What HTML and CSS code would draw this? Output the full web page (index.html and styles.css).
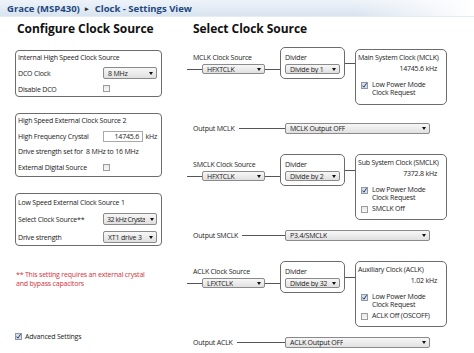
FILE: index.html
```html
<!DOCTYPE html>
<html>
<head>
<meta charset="utf-8">
<link rel="stylesheet" href="styles.css">
</head>
<body>
<div class="page">
  <div class="titlebar">Grace (MSP430) <span class="crumb">&#9656;</span> Clock - Settings View</div>
  <div class="main">
    <div class="left">
      <div class="heading">Configure Clock Source</div>
      <div class="box b1">
        <div class="row r-head">Internal High Speed Clock Source</div>
        <div class="row r-ctl"><span class="lbl">DCO Clock</span><div class="sel lsel"><span>8 MHz</span><i class="arrow"></i></div></div>
        <div class="row r-last"><span class="lbl">Disable DCO</span><span class="cb"></span></div>
      </div>
      <div class="box b2">
        <div class="row r-head">High Speed External Clock Source 2</div>
        <div class="row r-ctl"><span class="lbl">High Frequency Crystal</span><div class="inp">14745.6</div><span class="unit">kHz</span></div>
        <div class="row r-txt">Drive strength set for&nbsp; 8 MHz to 16 MHz</div>
        <div class="row r-last2"><span class="lbl">External Digital Source</span><span class="cb"></span></div>
      </div>
      <div class="box b3">
        <div class="row r-head3">Low Speed External Clock Source 1</div>
        <div class="row r-ctl"><span class="lbl">Select Clock Source**</span><div class="sel lsel tight"><span>32 kHz Crysta</span><i class="arrow"></i></div></div>
        <div class="row r-ctl"><span class="lbl">Drive strength</span><div class="sel lsel"><span>XT1 drive 3</span><i class="arrow"></i></div></div>
      </div>
      <div class="note">** This setting requires an external crystal<br>and bypass capacitors</div>
      <div class="adv"><span class="cb on"><svg viewBox="0 0 7 7" width="7" height="7"><path d="M1.6 3.6 L2.9 5.2 L5.6 1.2" fill="none" stroke="#2a3a55" stroke-width="1"/></svg></span><span>Advanced Settings</span></div>
    </div>
    <div class="right">
      <div class="heading hr">Select Clock Source</div>

      <div class="group">
        <div class="src">
          <div class="slbl">MCLK Clock Source</div>
          <div class="srow"><i class="hl w15"></i><div class="sel ssel"><span>HFXTCLK</span><i class="arrow"></i></div></div>
        </div>
        <i class="hl w15 c1"></i>
        <div class="div">
          <div class="dlbl">Divider</div>
          <div class="sel dsel"><span>Divide by 1</span><i class="arrow"></i></div>
        </div>
        <i class="hl w10 c2"></i>
        <div class="clk k1">
          <div class="ktitle">Main System Clock (MCLK)</div>
          <div class="kval">14745.6 kHz</div>
          <div class="kcb"><span class="cb on"><svg viewBox="0 0 7 7" width="7" height="7"><path d="M1.6 3.6 L2.9 5.2 L5.6 1.2" fill="none" stroke="#2a3a55" stroke-width="1"/></svg></span><span>Low Power Mode<br>Clock Request</span></div>
        </div>
      </div>
      <div class="out">
        <div class="olbl"><span>Output MCLK</span><i class="hl grow"></i></div>
        <div class="sel osel"><span>MCLK Output OFF</span><i class="arrow"></i></div>
      </div>

      <div class="group">
        <div class="src">
          <div class="slbl">SMCLK Clock Source</div>
          <div class="srow"><i class="hl w15"></i><div class="sel ssel"><span>HFXTCLK</span><i class="arrow"></i></div></div>
        </div>
        <i class="hl w15 c1"></i>
        <div class="div">
          <div class="dlbl">Divider</div>
          <div class="sel dsel"><span>Divide by 2</span><i class="arrow"></i></div>
        </div>
        <i class="hl w10 c2"></i>
        <div class="clk k2">
          <div class="ktitle">Sub System Clock (SMCLK)</div>
          <div class="kval">7372.8 kHz</div>
          <div class="kcb"><span class="cb on"><svg viewBox="0 0 7 7" width="7" height="7"><path d="M1.6 3.6 L2.9 5.2 L5.6 1.2" fill="none" stroke="#2a3a55" stroke-width="1"/></svg></span><span>Low Power Mode<br>Clock Request</span></div>
          <div class="kcb k-off"><span class="cb"></span><span>SMCLK Off</span></div>
        </div>
      </div>
      <div class="out">
        <div class="olbl"><span>Output SMCLK</span><i class="hl grow"></i></div>
        <div class="sel osel"><span>P3.4/SMCLK</span><i class="arrow"></i></div>
      </div>

      <div class="group">
        <div class="src">
          <div class="slbl">ACLK Clock Source</div>
          <div class="srow"><i class="hl w15"></i><div class="sel ssel"><span>LFXTCLK</span><i class="arrow"></i></div></div>
        </div>
        <i class="hl w15 c1"></i>
        <div class="div">
          <div class="dlbl">Divider</div>
          <div class="sel dsel"><span>Divide by 32</span><i class="arrow"></i></div>
        </div>
        <i class="hl w10 c2"></i>
        <div class="clk k3">
          <div class="ktitle">Auxiliary Clock (ACLK)</div>
          <div class="kval">1.02 kHz</div>
          <div class="kcb"><span class="cb on"><svg viewBox="0 0 7 7" width="7" height="7"><path d="M1.6 3.6 L2.9 5.2 L5.6 1.2" fill="none" stroke="#2a3a55" stroke-width="1"/></svg></span><span>Low Power Mode<br>Clock Request</span></div>
          <div class="kcb k-off"><span class="cb"></span><span>ACLK Off (OSCOFF)</span></div>
        </div>
      </div>
      <div class="out">
        <div class="olbl"><span>Output ACLK</span><i class="hl grow"></i></div>
        <div class="sel osel"><span>ACLK Output OFF</span><i class="arrow"></i></div>
      </div>
    </div>
  </div>
</div>
</body>
</html>
```

FILE: styles.css
```css
* { box-sizing: border-box; }
html, body { margin: 0; padding: 0; background: #fff; }
body { width: 474px; height: 353px; overflow: hidden; font-family: "Open Sans", "Noto Sans", sans-serif; font-size: 7px; letter-spacing: -0.2px; color: #222; }
.page { width: 474px; height: 353px; }

.titlebar {
  height: 17px; line-height: 17px; padding-left: 7px;
  font-weight: bold; font-size: 9.5px; letter-spacing: 0; color: #23477e;
  background: linear-gradient(to right, rgba(255,255,255,0) 75%, #fff 100%), linear-gradient(#eef3f9, #d9e4f0);
  border-bottom: 1px solid #e6ecf3;
}
.crumb { font-size: 7px; color: #333; position: relative; top: -1px; padding: 0 3px; }

.main { display: flex; }
.left { width: 187px; padding-left: 15px; }
.right { flex: 1; }

.heading { font-weight: bold; font-size: 12px; letter-spacing: -0.05px; line-height: 16px; height: 16px; margin-top: 4px; padding-left: 2px; color: #111; }
.hr { padding-left: 6px; margin-bottom: 10px; }
.left .heading { margin-bottom: 13px; }

.box { width: 147px; border: 1px solid #6c6c6c; border-radius: 4px; padding: 0 4px 0 2px; }
.row { display: flex; align-items: center; justify-content: space-between; }
.row .lbl { flex: 1; }
.r-head { height: 13px; }
.r-head3 { height: 16px; }
.r-ctl { height: 18px; }
.r-last { height: 13px; align-items: flex-end; padding-bottom: 1px; }
.r-txt { height: 12px; }
.r-last2 { height: 18px; padding-top: 3px; }
.b1 { height: 47px; }
.b2 { height: 64px; margin-top: 16px; }
.b3 { height: 53px; margin-top: 16px; }
.b1 .cb, .b2 .cb { margin-right: 47px; }
.b1 .r-last .cb { margin-bottom: 2px; }

.sel {
  display: flex; align-items: center; justify-content: space-between;
  background: linear-gradient(#f7f7f7, #e0e0e0);
  border: 1px solid #8a8a8a; border-radius: 2px;
  padding: 0 3px 0 4px; white-space: nowrap; overflow: hidden; color: #1a1a1a;
}
.sel span { overflow: hidden; }
.tight { padding-left: 3px; padding-right: 2px; letter-spacing: -0.45px; }
.tight .arrow { margin-left: 1px; }
.arrow { display: block; width: 0; height: 0; border-left: 2.5px solid transparent; border-right: 2.5px solid transparent; border-top: 3px solid #111; flex: none; margin-left: 2px; }
.lsel { width: 54px; height: 12px; }
.inp { width: 40px; height: 11px; border: 1px solid #a9a9a9; background: #fff; text-align: right; padding-right: 3px; line-height: 9px; }
.unit { width: 14px; text-align: right; }

.cb { display: inline-flex; width: 7px; height: 7px; border: 1px solid #9c9c9c; background: linear-gradient(#e8e8e8, #f8f8f8); flex: none; align-items: center; justify-content: center; }
.cb svg { display: block; margin: -1px; }
.cb.on { background: #d6deea; border-color: #8c98ad; }

.note { color: #d2323c; line-height: 8.5px; margin-top: 25px; padding-left: 1px; }
.adv { display: flex; align-items: center; margin-top: 44px; }
.adv .cb { margin-right: 3px; }

.group { display: flex; align-items: flex-start; height: 76px; }
.hl { display: block; height: 1px; background: #555; flex: none; }
.w15 { width: 15px; }
.w10 { width: 10px; }
.grow { flex: 1; margin-left: 4px; }
.c1 { margin-top: 22px; }
.c2 { margin-top: 16px; }

.src { width: 78px; }
.slbl { height: 17px; padding: 6px 0 0 6px; line-height: 10px; }
.srow { display: flex; align-items: center; height: 10px; }
.ssel { width: 63px; height: 10px; }

.div { width: 65px; height: 32px; border: 1px solid #6c6c6c; border-radius: 5px; padding: 0 0 0 4px; }
.dlbl { height: 16px; padding-top: 5px; line-height: 10px; }
.dsel { width: 55px; height: 10px; }

.clk { width: 92px; border: 1px solid #6c6c6c; border-radius: 5px; padding: 3px 9px 6px 2px; line-height: 9px; margin-top: 2px; white-space: nowrap; }
.k2, .k3 { margin-top: 0; }
.kval { text-align: right; margin-top: 1.5px; }
.kcb { display: flex; align-items: flex-start; margin-top: 8px; padding-left: 3px; line-height: 8.5px; }
.kcb .cb { margin-top: 1px; margin-right: 4px; }
.k-off { margin-top: 2px; }

.out { display: flex; align-items: center; height: 11px; margin-bottom: 20px; }
.olbl { width: 98px; display: flex; align-items: center; padding-left: 6px; }
.osel { width: 145px; height: 11px; }
```
